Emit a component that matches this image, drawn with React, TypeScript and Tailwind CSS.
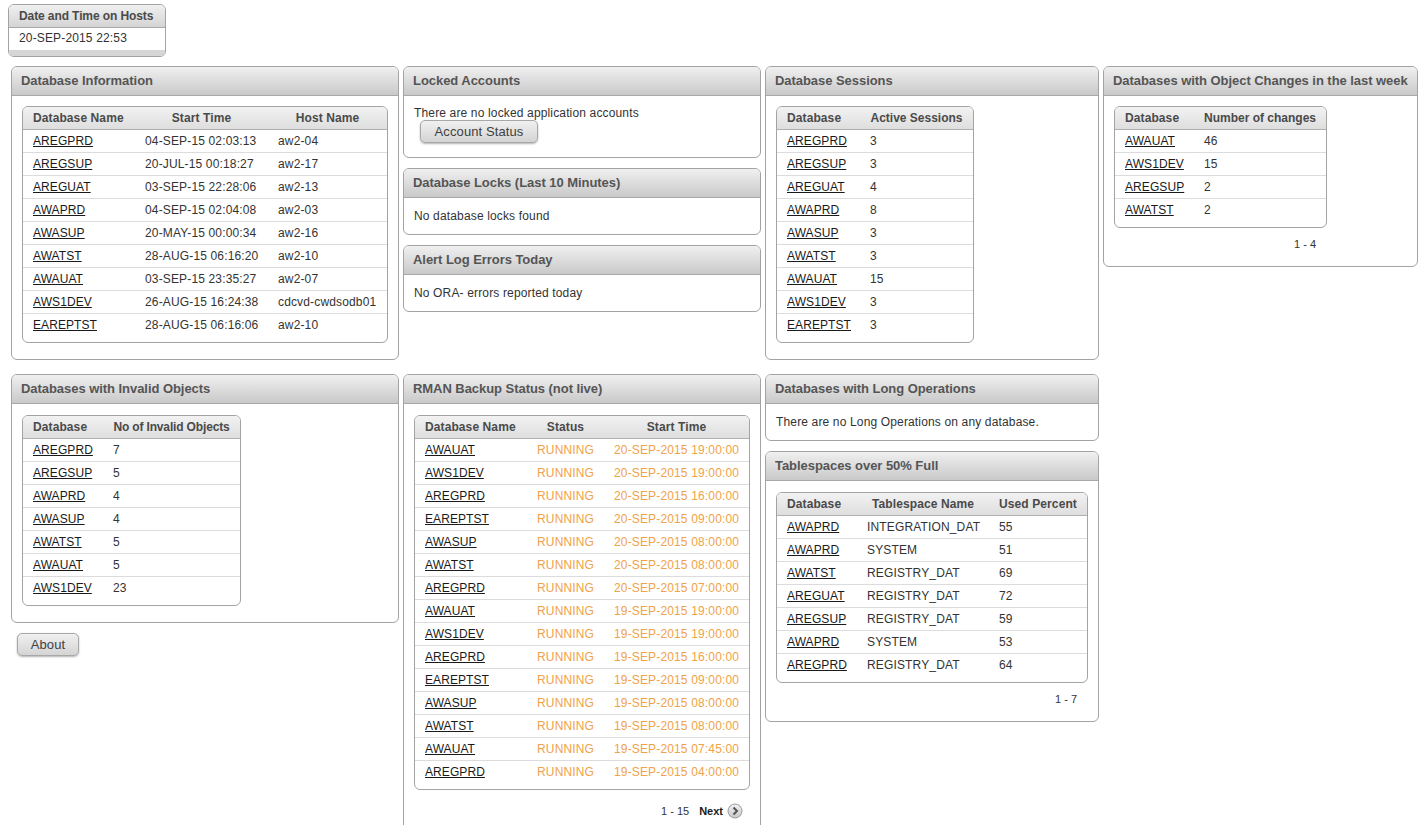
import React from "react";

type Cols = { w: string; head: string; cls?: string }[];

function Panel({ title, children, className = "", bodyClass = "" }: { title: string; children: React.ReactNode; className?: string; bodyClass?: string }) {
  return (
    <section className={`rounded-[6px] border border-[#a3a3a3] bg-white overflow-hidden ${className}`}>
      <h2 className="h-[29px] border-b border-[#a8a8a8] bg-gradient-to-b from-[#f0f0f0] to-[#c9c9c9] pl-[9px] text-[13px] leading-[28px] font-bold tracking-[-0.05px] text-[#555555] whitespace-nowrap">
        {title}
      </h2>
      <div className={bodyClass}>{children}</div>
    </section>
  );
}

function DataTable({ cols, rows, orange = false }: { cols: Cols; rows: string[][]; orange?: boolean }) {
  return (
    <div className="inline-block rounded-[6px] border border-[#a3a3a3] bg-white pb-[6px] overflow-hidden align-top">
      <table className="table-fixed border-collapse">
        <thead>
          <tr className="h-[22px] bg-gradient-to-b from-[#f2f2f2] to-[#dedede]">
            {cols.map((c, k) => (
              <th
                key={c.head}
                className={`${c.w} ${c.cls ?? "tracking-[0.1px]"} ${k === 0 ? "pl-[10px] text-left" : "text-center"} pt-[1px] border-b border-[#b0b0b0] text-[12px] font-bold text-[#4a4a4a] whitespace-nowrap`}
              >
                {c.head}
              </th>
            ))}
          </tr>
        </thead>
        <tbody>
          {rows.map((r, i) => (
            <tr key={i} className="h-[23px]">
              {r.map((v, j) => (
                <td
                  key={j}
                  className={`pl-[10px] text-[12px] tracking-[0.15px] whitespace-nowrap ${i < rows.length - 1 ? "border-b border-[#dcdcdc]" : ""} ${orange && j > 0 ? "text-[#f0a248]" : "text-[#333333]"}`}
                >
                  {j === 0 ? <a href="#" className="underline tracking-[0.08px] text-[#1a1a1a]">{v}</a> : v}
                </td>
              ))}
            </tr>
          ))}
        </tbody>
      </table>
    </div>
  );
}

function Button({ label, className = "" }: { label: string; className?: string }) {
  return (
    <button className={`block h-[23px] rounded-[5px] border border-[#a8a8a8] bg-gradient-to-b from-[#f0f0f0] to-[#d4d4d4] pt-[1px] text-[13px] tracking-[0.1px] text-[#404040] shadow-[0_1px_2px_rgba(0,0,0,0.3)] ${className}`}>
      {label}
    </button>
  );
}

const info = [
  ["AREGPRD", "04-SEP-15 02:03:13", "aw2-04"],
  ["AREGSUP", "20-JUL-15 00:18:27", "aw2-17"],
  ["AREGUAT", "03-SEP-15 22:28:06", "aw2-13"],
  ["AWAPRD", "04-SEP-15 02:04:08", "aw2-03"],
  ["AWASUP", "20-MAY-15 00:00:34", "aw2-16"],
  ["AWATST", "28-AUG-15 06:16:20", "aw2-10"],
  ["AWAUAT", "03-SEP-15 23:35:27", "aw2-07"],
  ["AWS1DEV", "26-AUG-15 16:24:38", "cdcvd-cwdsodb01"],
  ["EAREPTST", "28-AUG-15 06:16:06", "aw2-10"],
];
const sessions = [
  ["AREGPRD", "3"], ["AREGSUP", "3"], ["AREGUAT", "4"], ["AWAPRD", "8"], ["AWASUP", "3"],
  ["AWATST", "3"], ["AWAUAT", "15"], ["AWS1DEV", "3"], ["EAREPTST", "3"],
];
const changes = [["AWAUAT", "46"], ["AWS1DEV", "15"], ["AREGSUP", "2"], ["AWATST", "2"]];
const invalid = [
  ["AREGPRD", "7"], ["AREGSUP", "5"], ["AWAPRD", "4"], ["AWASUP", "4"], ["AWATST", "5"], ["AWAUAT", "5"], ["AWS1DEV", "23"],
];
const rman = [
  ["AWAUAT", "20-SEP-2015 19:00:00"], ["AWS1DEV", "20-SEP-2015 19:00:00"], ["AREGPRD", "20-SEP-2015 16:00:00"],
  ["EAREPTST", "20-SEP-2015 09:00:00"], ["AWASUP", "20-SEP-2015 08:00:00"], ["AWATST", "20-SEP-2015 08:00:00"],
  ["AREGPRD", "20-SEP-2015 07:00:00"], ["AWAUAT", "19-SEP-2015 19:00:00"], ["AWS1DEV", "19-SEP-2015 19:00:00"],
  ["AREGPRD", "19-SEP-2015 16:00:00"], ["EAREPTST", "19-SEP-2015 09:00:00"], ["AWASUP", "19-SEP-2015 08:00:00"],
  ["AWATST", "19-SEP-2015 08:00:00"], ["AWAUAT", "19-SEP-2015 07:45:00"], ["AREGPRD", "19-SEP-2015 04:00:00"],
].map(([a, b]) => [a, "RUNNING", b]);
const spaces = [
  ["AWAPRD", "INTEGRATION_DAT", "55"], ["AWAPRD", "SYSTEM", "51"], ["AWATST", "REGISTRY_DAT", "69"],
  ["AREGUAT", "REGISTRY_DAT", "72"], ["AREGSUP", "REGISTRY_DAT", "59"], ["AWAPRD", "SYSTEM", "53"], ["AREGPRD", "REGISTRY_DAT", "64"],
];

export default function App() {
  return (
    <div className="h-[825px] overflow-hidden bg-white font-['Liberation_Sans',Arial,sans-serif] text-[12px] tracking-[0.15px] text-[#333333]">
      <div className="ml-[8px] pt-[4px]">
        <section className="w-[158px] h-[53px] rounded-[6px] border border-[#a3a3a3] overflow-hidden flex flex-col">
          <h2 className="h-[23px] border-b border-[#a8a8a8] bg-gradient-to-b from-[#f0f0f0] to-[#d4d4d4] pl-[10px] text-[12px] leading-[22px] font-bold tracking-[-0.1px] text-[#4a4a4a]">
            Date and Time on Hosts
          </h2>
          <div className="flex-1 pl-[10px] pt-[2px] leading-[17px]">20-SEP-2015 22:53</div>
          <div className="h-[6px] bg-[#d6d6d6]" />
        </section>
      </div>

      <div className="mt-[9px] ml-[11px] grid grid-cols-[388px_358px_334px_315px] gap-x-[4px] gap-y-[14px]">
        <Panel title="Database Information" bodyClass="pt-[10px] px-[10px] pb-[16px]">
          <DataTable
            cols={[{ w: "w-[112px]", head: "Database Name" }, { w: "w-[133px]", head: "Start Time" }, { w: "w-[119px]", head: "Host Name" }]}
            rows={info}
          />
        </Panel>

        <div className="flex flex-col gap-[10px]">
          <Panel title="Locked Accounts" className="h-[92px]" bodyClass="pl-[10px] pt-[10px]">
            <p className="leading-[14px]">There are no locked application accounts</p>
            <Button label="Account Status" className="ml-[6px] w-[118px]" />
          </Panel>
          <Panel title="Database Locks (Last 10 Minutes)" className="h-[67px]" bodyClass="pl-[10px] pt-[11px]">
            <p className="leading-[15px]">No database locks found</p>
          </Panel>
          <Panel title="Alert Log Errors Today" className="h-[67px]" bodyClass="pl-[10px] pt-[11px]">
            <p className="leading-[15px]">No ORA- errors reported today</p>
          </Panel>
        </div>

        <Panel title="Database Sessions" bodyClass="pt-[10px] px-[10px] pb-[16px]">
          <DataTable cols={[{ w: "w-[83px]", head: "Database" }, { w: "w-[113px]", head: "Active Sessions", cls: "tracking-normal" }]} rows={sessions} />
        </Panel>

        <Panel title="Databases with Object Changes in the last week" className="self-start h-[201px]" bodyClass="pt-[10px] px-[10px]">
          <DataTable cols={[{ w: "w-[79px]", head: "Database" }, { w: "w-[132px]", head: "Number of changes", cls: "tracking-normal" }]} rows={changes} />
          <div className="mt-[9px] w-[202px] text-right text-[11px] leading-[15px] tracking-normal">1 - 4</div>
        </Panel>

        <div className="flex flex-col gap-[10px]">
          <Panel title="Databases with Invalid Objects" bodyClass="pt-[11px] px-[10px] pb-[16px]">
            <DataTable cols={[{ w: "w-[80px]", head: "Database" }, { w: "w-[137px]", head: "No of Invalid Objects", cls: "tracking-[-0.15px]" }]} rows={invalid} />
          </Panel>
          <Button label="About" className="ml-[6px] w-[62px]" />
        </div>

        <Panel title="RMAN Backup Status (not live)" className="h-[500px]" bodyClass="pt-[11px] px-[10px]">
          <DataTable
            cols={[{ w: "w-[112px]", head: "Database Name" }, { w: "w-[77px]", head: "Status" }, { w: "w-[145px]", head: "Start Time" }]}
            rows={rman}
            orange
          />
          <div className="mt-[13px] flex h-[16px] items-center justify-end gap-[10px] pr-[7px] text-[11px] tracking-normal">
            <span>1 - 15</span>
            <span className="flex items-center gap-[4px] font-bold text-[#1a1a1a]">
              Next
              <svg width="16" height="16" viewBox="0 0 16 16" aria-hidden="true">
                <defs>
                  <linearGradient id="nx" x1="0" y1="0" x2="0" y2="1">
                    <stop offset="0" stopColor="#f2f2f2" />
                    <stop offset="1" stopColor="#c8c8c8" />
                  </linearGradient>
                </defs>
                <circle cx="8" cy="8" r="7" fill="url(#nx)" stroke="#9a9a9a" />
                <path d="M6.5 4.5 L10 8 L6.5 11.5" fill="none" stroke="#555555" strokeWidth="2" />
              </svg>
            </span>
          </div>
        </Panel>

        <div className="flex flex-col gap-[10px]">
          <Panel title="Databases with Long Operations" className="h-[67px]" bodyClass="pl-[10px] pt-[11px]">
            <p className="leading-[15px]">There are no Long Operations on any database.</p>
          </Panel>
          <Panel title="Tablespaces over 50% Full" className="h-[271px]" bodyClass="pt-[11px] px-[10px]">
            <DataTable
              cols={[{ w: "w-[80px]", head: "Database" }, { w: "w-[132px]", head: "Tablespace Name" }, { w: "w-[98px]", head: "Used Percent" }]}
              rows={spaces}
            />
            <div className="mt-[9px] w-[301px] text-right text-[11px] leading-[15px] tracking-normal">1 - 7</div>
          </Panel>
        </div>
        <div />
      </div>
    </div>
  );
}
